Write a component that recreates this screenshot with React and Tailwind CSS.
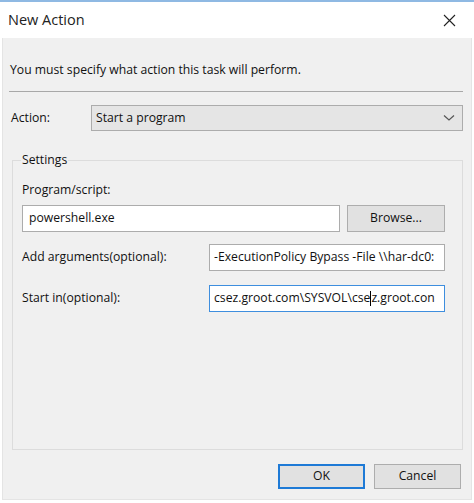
import React from "react";

function Chevron() {
  return (
    <svg width="12" height="8" viewBox="0 0 12 8" fill="none">
      <path d="M1 1.5 L6 6 L11 1.5" stroke="#555" strokeWidth="1.2" />
    </svg>
  );
}

function CloseX() {
  return (
    <svg width="13" height="13" viewBox="0 0 13 13" fill="none">
      <path d="M1 1 L12 12 M12 1 L1 12" stroke="#222" strokeWidth="1.1" />
    </svg>
  );
}

export default function App() {
  return (
    <div
      className="w-[474px] h-[503px] bg-white overflow-hidden text-[#111]"
      style={{ fontFamily: '"Open Sans", "Noto Sans", sans-serif' }}
    >
      <div className="h-[2px] bg-[#8fb9e3]" />
      <div className="h-[36px] bg-white flex items-center justify-between pl-[8px] pr-[18px]">
        <span className="text-[14.5px] text-[#222]">New Action</span>
        <CloseX />
      </div>
      <div className="h-[462px] bg-[#f0f0f0] border-l border-r border-b border-[#e4e4e4] mx-[2px] flex flex-col text-[12.2px]">
        <div className="pl-[7px] pt-[23px] h-[53px]">
          You must specify what action this task will perform.
        </div>
        <div className="mx-[6px] mr-[8px] h-px bg-[#a8a8a8]" />
        <div className="flex items-center mt-[13px] pl-[8px] pr-[8px]">
          <span className="w-[80px]">Action:</span>
          <div className="flex-1 h-[26px] bg-[#e5e5e5] border border-[#acacac] flex items-center justify-between pl-[4px] pr-[7px]">
            <span>Start a program</span>
            <Chevron />
          </div>
        </div>
        <div className="relative mt-[29px] ml-[9px] mr-[8px] h-[290px] border border-[#dcdcdc]">
          <span className="absolute -top-[10px] left-[8px] px-[1px] bg-[#f0f0f0] leading-[18px]">
            Settings
          </span>
          <div className="pt-[20px] pl-[9px] pr-[17px] flex flex-col">
            <div className="leading-[18px]">Program/script:</div>
            <div className="flex items-center mt-[6px] gap-[7px]">
              <div className="w-[318px] h-[27px] bg-white border border-[#acacac] flex items-center pl-[6px]">
                powershell.exe
              </div>
              <div className="w-[98px] h-[27px] bg-[#e1e1e1] border border-[#adadad] flex items-center justify-center">
                Browse...
              </div>
            </div>
            <div className="flex items-center mt-[12px]">
              <span className="w-[187px]">Add arguments(optional):</span>
              <div className="flex-1 h-[27px] bg-white border border-[#acacac] flex items-center pl-[4px] overflow-hidden whitespace-nowrap">
                -ExecutionPolicy Bypass -File \\har-dc0:
              </div>
            </div>
            <div className="flex items-center mt-[14px]">
              <span className="w-[187px]">Start in(optional):</span>
              <div className="flex-1 h-[27px] bg-white border border-[#3e8ede] flex items-center pl-[4px] overflow-hidden whitespace-nowrap">
                <span>csez.groot.com\SYSVOL\cse</span>
                <span className="inline-block w-px h-[15px] bg-black" />
                <span>z.groot.con</span>
              </div>
            </div>
          </div>
        </div>
        <div className="flex justify-end gap-[9px] mt-[14px] mr-[10px]">
          <div className="w-[87px] h-[25px] bg-[#e1e1e1] border-2 border-[#1e7ad6] flex items-center justify-center">
            OK
          </div>
          <div className="w-[87px] h-[25px] bg-[#e1e1e1] border border-[#adadad] flex items-center justify-center">
            Cancel
          </div>
        </div>
      </div>
    </div>
  );
}
